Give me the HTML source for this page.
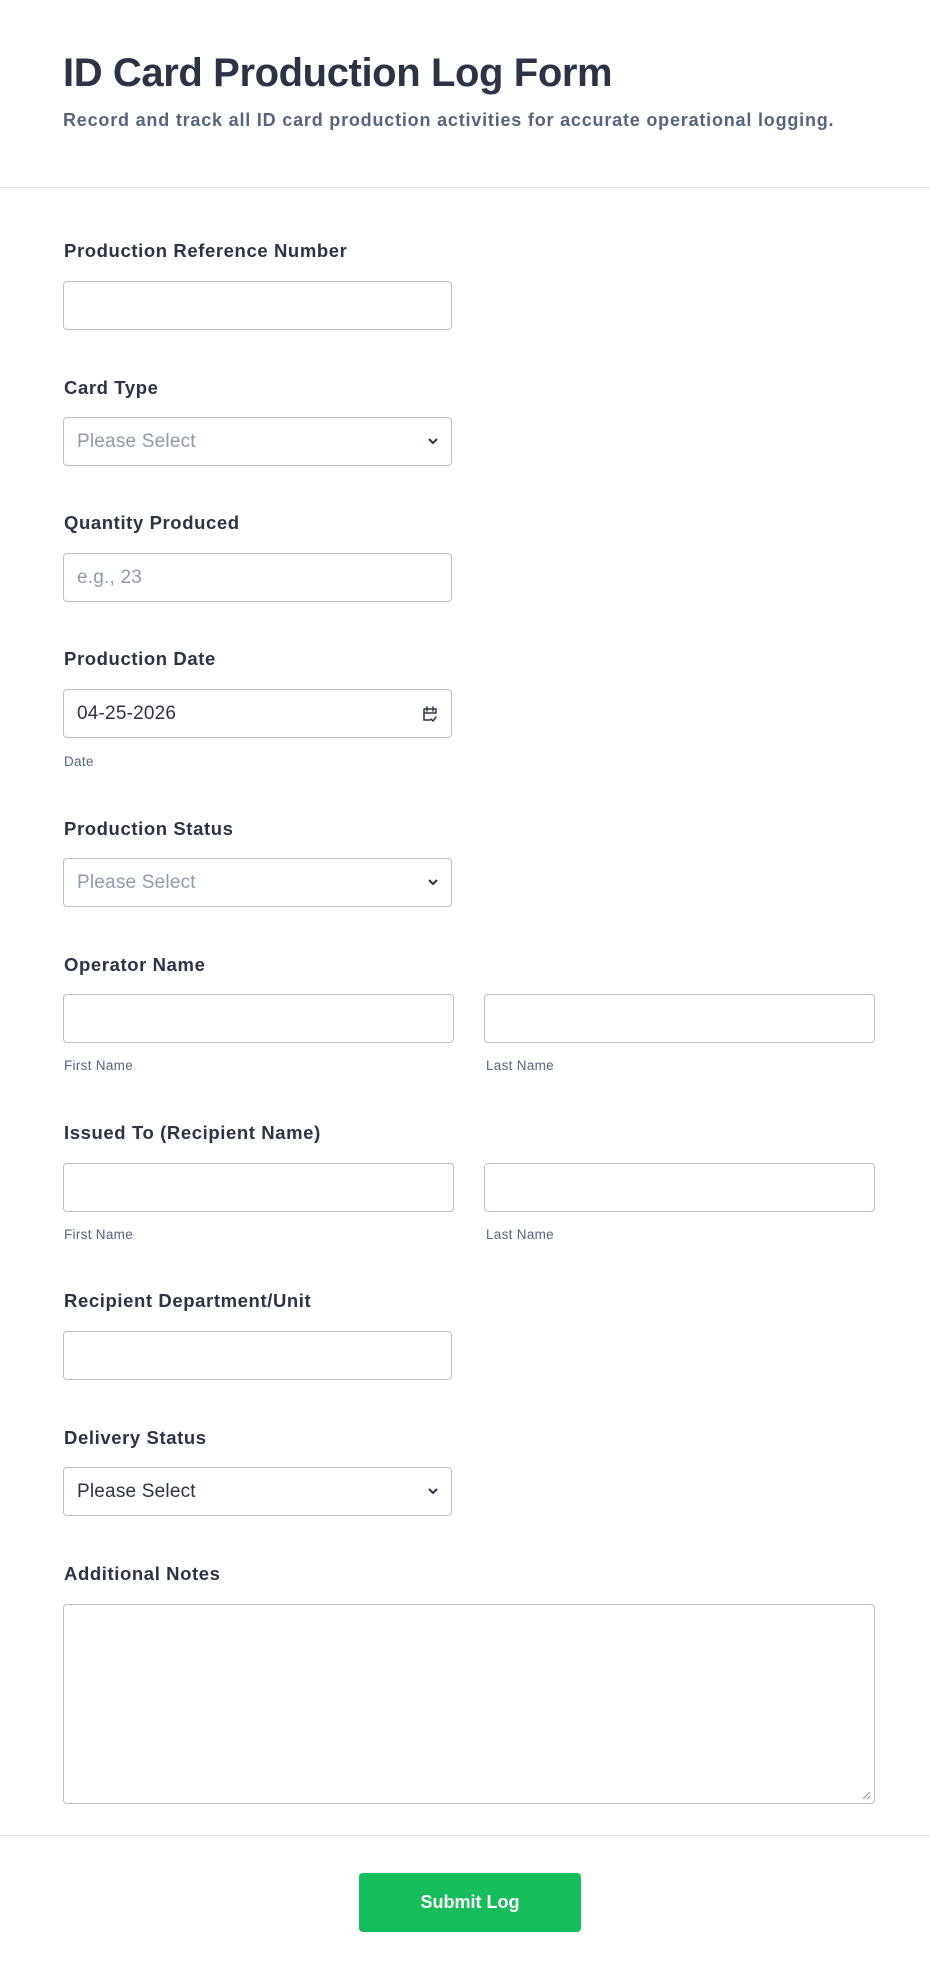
<!DOCTYPE html>
<html><head><meta charset="utf-8"><style>
*{box-sizing:border-box;margin:0;padding:0}
body{width:930px;height:1984px;background:#fff;font-family:"Liberation Sans",sans-serif;position:relative;color:#2c3345;overflow:hidden}
.a{position:absolute}
h1{position:absolute;left:63px;top:51px;font-size:40px;font-weight:700;color:#2c3345;letter-spacing:-0.4px}
.sub{left:63px;top:110px;font-size:18px;font-weight:600;color:#57647e;letter-spacing:0.8px}
.hr{left:0;width:930px;height:1px;background:#e3e5ea}
.lb{left:64px;font-size:18.5px;font-weight:700;color:#2c3345;letter-spacing:0.6px;margin-top:0}
.in{border:1px solid #b8bdc9;border-radius:4px;background:#fff;height:49px}
.ph{font-size:19px;color:#8f9aac;position:absolute;left:13px;top:13px;letter-spacing:0.2px}
.dk{color:#2c3345}
.sl{font-size:13.5px;color:#57647e;letter-spacing:0.3px}
.chev{position:absolute;right:12px;top:18px}
</style></head><body>
<h1>ID Card Production Log Form</h1>
<div class="a sub">Record and track all ID card production activities for accurate operational logging.</div>
<div class="a hr" style="top:187px"></div>

<div class="a lb" style="top:240px">Production Reference Number</div>
<div class="a in" style="left:63px;top:281px;width:389px"></div>

<div class="a lb" style="top:377px">Card Type</div>
<div class="a in" style="left:63px;top:417px;width:389px"><span class="ph">Please Select</span><svg class="chev" width="12" height="10" viewBox="0 0 12 10"><path d="M2 3l4 4 4-4" fill="none" stroke="#2c3345" stroke-width="2"/></svg></div>

<div class="a lb" style="top:512px">Quantity Produced</div>
<div class="a in" style="left:63px;top:553px;width:389px"><span class="ph">e.g., 23</span></div>

<div class="a lb" style="top:648px">Production Date</div>
<div class="a in" style="left:63px;top:689px;width:389px"><span class="ph dk">04-25-2026</span>
<svg class="a" style="right:12px;top:15px" width="18" height="18" viewBox="0 0 18 18"><path d="M3 4h12v4M3 4v11h6M3 8h12M6 2v4M12 2v4M10 14l2 2 3-4" fill="none" stroke="#2c3345" stroke-width="1.5" stroke-linecap="round"/></svg></div>
<div class="a sl" style="left:64px;top:754px">Date</div>

<div class="a lb" style="top:818px">Production Status</div>
<div class="a in" style="left:63px;top:858px;width:389px"><span class="ph">Please Select</span><svg class="chev" width="12" height="10" viewBox="0 0 12 10"><path d="M2 3l4 4 4-4" fill="none" stroke="#2c3345" stroke-width="2"/></svg></div>

<div class="a lb" style="top:954px">Operator Name</div>
<div class="a in" style="left:63px;top:994px;width:391px"></div>
<div class="a in" style="left:484px;top:994px;width:391px"></div>
<div class="a sl" style="left:64px;top:1058px">First Name</div>
<div class="a sl" style="left:486px;top:1058px">Last Name</div>

<div class="a lb" style="top:1122px">Issued To (Recipient Name)</div>
<div class="a in" style="left:63px;top:1163px;width:391px"></div>
<div class="a in" style="left:484px;top:1163px;width:391px"></div>
<div class="a sl" style="left:64px;top:1227px">First Name</div>
<div class="a sl" style="left:486px;top:1227px">Last Name</div>

<div class="a lb" style="top:1290px">Recipient Department/Unit</div>
<div class="a in" style="left:63px;top:1331px;width:389px"></div>

<div class="a lb" style="top:1427px">Delivery Status</div>
<div class="a in" style="left:63px;top:1467px;width:389px"><span class="ph dk">Please Select</span><svg class="chev" width="12" height="10" viewBox="0 0 12 10"><path d="M2 3l4 4 4-4" fill="none" stroke="#2c3345" stroke-width="2"/></svg></div>

<div class="a lb" style="top:1563px">Additional Notes</div>
<div class="a in" style="left:63px;top:1604px;width:812px;height:200px">
<svg class="a" style="right:3px;bottom:3px" width="10" height="10" viewBox="0 0 10 10"><path d="M9 2L2 9M9 6L6 9" stroke="#999" stroke-width="1"/></svg></div>

<div class="a hr" style="top:1835px"></div>
<div class="a" style="left:359px;top:1873px;width:222px;height:59px;background:#18bd5b;border-radius:4px;color:#fff;font-size:18px;font-weight:700;text-align:center;line-height:59px">Submit Log</div>
</body></html>
